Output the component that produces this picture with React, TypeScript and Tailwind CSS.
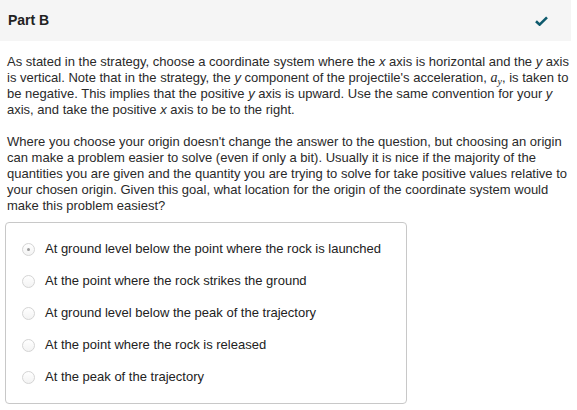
import { useState } from 'react';

const OPTIONS = [
  'At ground level below the point where the rock is launched',
  'At the point where the rock strikes the ground',
  'At ground level below the peak of the trajectory',
  'At the point where the rock is released',
  'At the peak of the trajectory',
];

function CheckIcon() {
  return (
    <svg width="13" height="10" viewBox="0 0 13 10" aria-hidden="true">
      <path d="M1 5.2 L4.6 8.6 L12 1.4" fill="none" stroke="#0e5a6d" strokeWidth="2.6" strokeLinejoin="miter" />
    </svg>
  );
}

export default function App() {
  const [selected, setSelected] = useState(0);

  return (
    <div className="w-[577px] h-[410px] bg-white pr-[6px] font-['Liberation_Sans',Arial,sans-serif] text-[#2a2a2a]">
      {/* Header */}
      <div className="flex h-[41px] items-center justify-between bg-[#f5f5f5] pl-2 pr-[23px]">
        <h2 className="text-[14px] font-bold text-[#222]">Part B</h2>
        <CheckIcon />
      </div>

      {/* Body */}
      <div className="pl-[7px] pt-[13px] text-[13px] leading-[16px]">
        <p>
          As stated in the strategy, choose a coordinate system where the <i>x</i> axis is horizontal and the{' '}
          <i>y</i> axis is vertical. Note that in the strategy, the <i>y</i> component of the projectile's
          acceleration,{' '}
          <span className="font-['Liberation_Serif',serif] italic text-[14px] leading-none">
            a<sub className="text-[10px]">y</sub>
          </span>
          , is taken to be negative. This implies that the positive <i>y</i> axis is upward. Use the same
          convention for your <i>y</i> axis, and take the positive <i>x</i> axis to be to the right.
        </p>
        <p className="mt-4">
          Where you choose your origin doesn't change the answer to the question, but choosing an origin can make
          a problem easier to solve (even if only a bit). Usually it is nice if the majority of the quantities you
          are given and the quantity you are trying to solve for take positive values relative to your chosen
          origin. Given this goal, what location for the origin of the coordinate system would make this problem
          easiest?
        </p>

        <div className="mt-2 w-[402px] -ml-[2px] rounded-[4px] border border-[#c8c8c8] py-[10px] pl-[16px]">
          {OPTIONS.map((opt, i) => (
            <label key={opt} className="flex h-[32px] cursor-pointer items-center gap-[10px]">
              <span
                onClick={() => setSelected(i)}
                className="flex h-[13px] w-[13px] shrink-0 items-center justify-center rounded-full border border-[#d4d4d4] bg-gradient-to-b from-white to-[#f3f3f3]"
              >
                {selected === i && <span className="h-[3px] w-[3px] rounded-full bg-[#9a9a9a]" />}
              </span>
              <span className="text-[13px] text-[#222]">{opt}</span>
            </label>
          ))}
        </div>
      </div>
    </div>
  );
}
